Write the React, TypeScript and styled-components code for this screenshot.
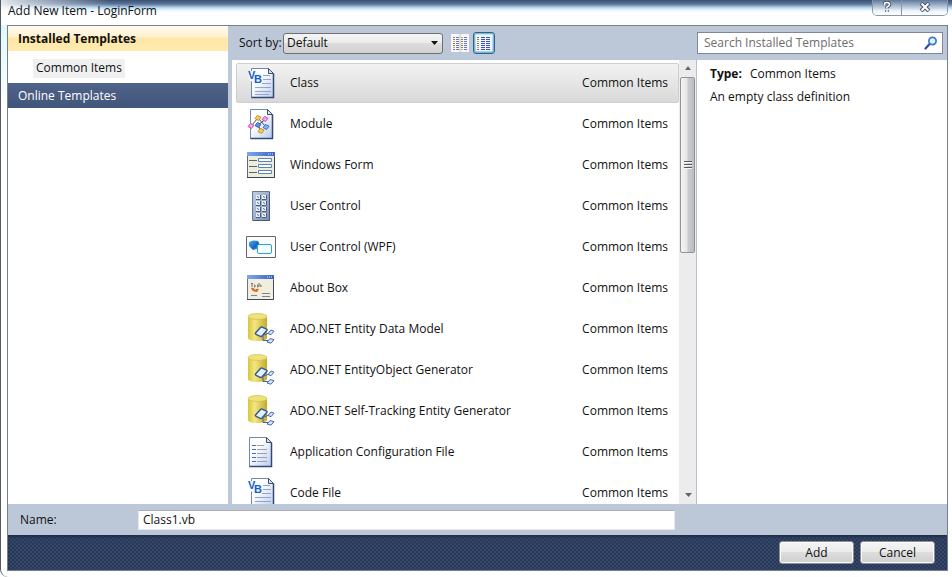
import React, { useState } from "react";
import styled, { createGlobalStyle, css } from "styled-components";

const GlobalStyle = createGlobalStyle`
  * { box-sizing: border-box; }
  body { margin: 0; background: #fff; }
  body, button, input, select {
    font-family: "Open Sans", "Noto Sans", sans-serif;
    font-size: 12px;
    line-height: 16px;
    color: #111;
  }
`;

const Window = styled.main`
  display: flex;
  flex-direction: column;
  height: 100vh;
  min-height: 320px;
  padding: 0 4px 6px 6px;
  overflow: hidden;
  border-left: 1px solid #55585c;
  border-radius: 0 0 0 8px;
  background: linear-gradient(#d3f2fc, #e6fbff 45px, #fff 110px) left top / 6px 120px no-repeat, #fff;
`;

const TitleBar = styled.header`
  display: flex;
  align-items: flex-start;
  justify-content: space-between;
  flex: none;
  height: 25px;
  margin: 0 -4px 0 -6px;
  padding: 0 4px 0 7px;
  background:
    linear-gradient(90deg, rgba(255, 255, 255, 0.85) 0, rgba(255, 255, 255, 0.6) 30px, transparent 110px),
    linear-gradient(#3b5071 0, #5b7498 4px, #bfe0f5 8px, #f4fcff 11px, #fff 14px);
`;

const Title = styled.h1`
  margin: 0;
  padding-top: 3px;
  font-size: 12px;
  font-weight: 400;
  line-height: 16px;
`;

const CaptionButtons = styled.div`
  display: flex;
  height: 16px;
  border: 1px solid #8b97a8;
  border-top: 0;
  border-radius: 0 0 5px 5px;
  overflow: hidden;
`;

const CaptionButton = styled.button<{ $wide?: boolean }>`
  display: flex;
  align-items: center;
  justify-content: center;
  width: ${(p) => (p.$wide ? 46 : 28)}px;
  padding: 0 0 2px;
  border: 0;
  background: linear-gradient(#61789a, #a9bdd3 6px, #eef6fc 11px, #fff);
  & + & { border-left: 1px solid #8b97a8; }
`;

const Frame = styled.div`
  display: flex;
  flex-direction: column;
  flex: 1;
  min-height: 0;
  border: 1px solid #74808f;
  background: #bcc7d8;
`;

const Body = styled.div`
  display: grid;
  grid-template-columns: 220px minmax(0, 1fr) 250px;
  flex: 1;
  min-height: 0;
`;

const Sidebar = styled.nav`
  display: flex;
  flex-direction: column;
  background: #fff;
`;

const SidebarHeading = styled.a<{ $open?: boolean }>`
  height: 25px;
  padding: 5px 10px 4px;
  text-decoration: none;
  ${(p) =>
    p.$open
      ? css`
          color: #111;
          font-weight: 700;
          background: linear-gradient(#fffbef, #fff1cf 11px, #ffe8a6 12px, #ffe9b0);
        `
      : css`
          color: #fff;
          background: linear-gradient(#4f6289, #42557b);
        `}
`;

const SidebarItem = styled.a`
  align-self: flex-start;
  margin: 8px 0 5px 25px;
  padding: 1px 3px 2px;
  color: #111;
  background: #f0f0f0;
  text-decoration: none;
`;

const Center = styled.section`
  display: flex;
  flex-direction: column;
  min-width: 0;
  min-height: 0;
  padding-left: 4px;
`;

const Toolbar = styled.div`
  display: flex;
  align-items: center;
  flex: none;
  height: 34px;
  padding-left: 7px;
`;

const SortLabel = styled.label`
  width: 44px;
  white-space: nowrap;
`;

const SortBox = styled.span`
  position: relative;
  display: flex;
  width: 160px;
  margin-right: 6px;
  svg {
    position: absolute;
    right: 5px;
    top: 8px;
    pointer-events: none;
  }
`;

const SortSelect = styled.select`
  width: 100%;
  height: 21px;
  padding: 0 3px;
  appearance: none;
  border: 1px solid #707070;
  border-radius: 3px;
  background: linear-gradient(#f4f4f4, #ebebeb 50%, #dddddd 50%, #d2d2d2);
  line-height: 18px;
`;

const ViewButton = styled.button<{ $active?: boolean }>`
  display: flex;
  align-items: center;
  justify-content: center;
  width: 22px;
  height: 22px;
  margin-right: 2px;
  padding: 0;
  border: 1px solid ${(p) => (p.$active ? "#2f628a" : "transparent")};
  border-radius: 3px;
  background: ${(p) => (p.$active ? "linear-gradient(#d6edf9, #a7d3ee)" : "none")};
  ${(p) => p.$active && "box-shadow: inset 0 0 1px 1px #75b0d3;"}
`;

const ListArea = styled.div`
  display: flex;
  flex: 1;
  min-height: 0;
  background: #fff;
`;

const List = styled.ul`
  flex: 1;
  min-width: 0;
  margin: 0;
  padding: 3px 0 0 4px;
  overflow: hidden;
  list-style: none;
`;

const Row = styled.button<{ $selected: boolean }>`
  display: flex;
  align-items: center;
  width: 100%;
  height: 40px;
  margin-bottom: 1px;
  padding: 0 10px 0 8px;
  border: 1px solid transparent;
  border-radius: 2px;
  background: none;
  text-align: left;
  ${(p) =>
    p.$selected &&
    css`
      border-color: #cfcfcf;
      background: linear-gradient(#f2f2f2, #d9d9d9);
    `}
  svg { flex: none; }
`;

const RowName = styled.span`
  flex: 1;
  min-width: 0;
  padding-left: 13px;
  white-space: nowrap;
`;

const ScrollBar = styled.div`
  display: flex;
  flex-direction: column;
  flex: none;
  width: 18px;
  padding: 0 1px;
  border-right: 1px solid #b4bfcb;
  background: #ececec;
`;

const ScrollButton = styled.button`
  display: flex;
  align-items: center;
  justify-content: center;
  height: 17px;
  padding: 0;
  border: 0;
  background: none;
`;

const ScrollTrack = styled.div`
  flex: 1;
`;

const ScrollThumb = styled.div`
  display: flex;
  align-items: center;
  justify-content: center;
  height: 43%;
  border: 1px solid #8f9297;
  border-radius: 2px;
  background: linear-gradient(90deg, #f5f5f5, #e6e6e6 45%, #cbcbcf 55%, #bdbdc1);
`;

const Details = styled.aside`
  display: flex;
  flex-direction: column;
  min-height: 0;
`;

const SearchBox = styled.label`
  display: flex;
  align-items: center;
  flex: none;
  height: 22px;
  margin: 6px 4px 6px 0;
  padding-right: 4px;
  border: 1px solid #7c889b;
  background: #fff;
`;

const SearchInput = styled.input`
  flex: 1;
  min-width: 0;
  padding: 0 6px;
  border: 0;
  outline: 0;
  background: none;
  &::placeholder { color: #6d6d6d; opacity: 1; }
`;

const Description = styled.div`
  flex: 1;
  padding: 6px 13px;
  background: #fff;
  p { margin: 0 0 7px; }
  b { margin-right: 8px; }
`;

const NameRow = styled.div`
  display: flex;
  align-items: center;
  flex: none;
  height: 31px;
  padding: 0 272px 0 12px;
`;

const NameLabel = styled.label`
  flex: none;
  width: 118px;
`;

const NameInput = styled.input`
  flex: 1;
  min-width: 0;
  height: 20px;
  padding: 0 4px;
  border: 1px solid #e3e9ef;
  border-top-color: #abadb3;
  background: #fff;
`;

const Footer = styled.footer`
  display: flex;
  align-items: flex-start;
  justify-content: flex-end;
  flex: none;
  gap: 6px;
  height: 35px;
  padding: 6px 12px 6px;
  background:
    linear-gradient(#35486a, #35486a) 0 0 / 1px 1px no-repeat,
    conic-gradient(#34476a 25%, transparent 0) 0 0 / 4px 4px,
    conic-gradient(#34476a 25%, transparent 0) 2px 2px / 4px 4px,
    #293955;
  box-shadow: inset 0 2px 2px #22304a;
`;

const DialogButton = styled.button`
  width: 75px;
  height: 23px;
  padding: 0;
  border: 1px solid #8d8f93;
  border-radius: 3px;
  background: linear-gradient(#f4f4f4, #ebebeb 50%, #dddddd 50%, #cfcfcf);
  box-shadow: inset 0 0 0 1px #fafafa;
`;

type IconKind = "vb" | "module" | "form" | "control" | "wpf" | "about" | "entity" | "config";

const Page = ({ x }: { x: number }) => (
  <g transform={`translate(${x} 0)`}>
    <path d="M.5 1.5h17l5 5v24H.5z" fill="url(#paper)" stroke="#7189ad" />
    <path d="M22.5 6.5v24H.5" fill="none" stroke="#324a73" strokeWidth="1.5" />
    <path d="M17.5 1.5v5h5z" fill="#dce3ec" stroke="#3f4f66" />
  </g>
);

const Gem = ({ x, y, fill, stroke }: { x: number; y: number; fill: string; stroke: string }) => (
  <path
    d="M-3 .5-.5-2.500 3-.8.500 2.500z"
    transform={`translate(${x} ${y})`}
    fill={fill}
    stroke={stroke}
    strokeLinejoin="round"
  />
);

const drawings: Record<IconKind, React.ReactNode> = {
  vb: (
    <>
      <Page x={6} />
      <path d="M18 8.500h7M18 12.500h8M12 16.500h14M10 20.500h16M10 24.500h16M10 27.500h14" stroke="#94a5ca" />
      <path d="M2 4h8l7 4v9H9l-5-5z" fill="#f4f8ff" />
      <g fill="#1761c6" fontFamily="Liberation Sans, sans-serif" fontWeight="700" fontSize="11">
        <text x="3" y="12">V</text>
        <text x="9" y="16">B</text>
      </g>
    </>
  ),
  module: (
    <>
      <Page x={5} />
      <path d="m6 18 7-8 8 9m-8-2 8-6m-8 6 3 6" fill="none" stroke="#41495c" />
      <Gem x={13} y={10} fill="#f7cf5d" stroke="#c98d17" />
      <Gem x={20} y={11} fill="#f3a2ea" stroke="#c252bd" />
      <Gem x={6} y={18} fill="#f3a2ea" stroke="#c252bd" />
      <Gem x={13} y={17} fill="#5f95ea" stroke="#2e62b8" />
      <Gem x={21} y={19} fill="#8db5f5" stroke="#3a6dc0" />
      <Gem x={16} y={23} fill="#f7cf5d" stroke="#c98d17" />
    </>
  ),
  form: (
    <>
      <path d="M2.500 3.500h27v25h-27z" fill="#eeecdd" stroke="#5c6a80" />
      <path d="M2 3h28v4H2z" fill="url(#caption)" />
      <path d="M23 5h1m1 0h1m1 0h1" stroke="#dbe7ff" />
      <path d="M4 11.500h8m-8 6h8m-8 6h8" stroke="#59606e" />
      <path d="M13.500 9.500h13v3h-13zm0 6h13v3h-13zm0 6h13v3h-13z" fill="#fff" stroke="#5a83bd" />
      <path d="M29.500 8v20.500H2" fill="none" stroke="#384454" />
    </>
  ),
  control: (
    <>
      <path d="M7.500 1.500h17v29h-17z" fill="url(#steel)" stroke="#66799b" />
      <path d="M24.500 2v28.500H8" fill="none" stroke="#485878" />
      {[5, 11, 17, 23].map((y) =>
        [11, 17].map((x) => (
          <g key={`${x}-${y}`} transform={`translate(${x} ${y})`}>
            <path d="M0 0h5v5H0z" fill="#e8eef7" />
            <path d="M4.500 0v4.500H0" fill="none" stroke="#4a5b7b" />
            <path d="M1 1.500h1v1h1" fill="none" stroke="#7688a7" />
          </g>
        )),
      )}
    </>
  ),
  wpf: (
    <>
      <path d="M1.500 5.500h29v21h-29z" fill="#fbfbfc" stroke="#64686e" />
      <path d="M4 11 8 9.500l5 .5 2 4-3 4-4 1-4-4z" fill="url(#blob)" />
      <rect x="12.500" y="13.500" width="14" height="9" rx="1.500" fill="#f6fdff" stroke="#27a7d8" />
    </>
  ),
  about: (
    <>
      <path d="M2.500 3.500h26v24h-26z" fill="#f2eedf" stroke="#6d7380" />
      <path d="M2 3h27v4H2z" fill="url(#caption)" />
      <path d="M22 5h1m1 0h1m1 0h1" stroke="#dbe7ff" />
      <path d="m6 11 1 1 1-1m-1 1v3m2-2h1v2H9m3-2h1v2h-1m2-4v4m1-2h1v2" fill="none" stroke="#5c5040" strokeWidth=".8" />
      <path d="M6 16q3-1 4 2 2-2 4-1l-2 3q-5 0-6-4z" fill="#d56b1c" />
      <path d="M6 23.500h6m5-2h8m-8 3h8" stroke="#7b8290" />
      <path d="M28.500 8v19.500H2" fill="none" stroke="#434a56" />
    </>
  ),
  entity: (
    <>
      <path d="M3 3v22c0 4 19 4 19 0V3z" fill="url(#gold)" />
      <ellipse cx="12.500" cy="3.500" rx="9.500" ry="3" fill="#ede27c" stroke="#d0c04a" strokeWidth=".7" />
      <path d="M18 22v5.500h6M19 22l5-2" fill="none" stroke="#44649c" />
      <path d="m10.500 20 5-5.500q.7-.7 1.600-.4l4.400 1.900q1 .6.300 1.500l-4.800 5.500q-.7.700-1.600.3l-4.300-1.900q-1-.6-.6-1.400z" fill="#e4efff" stroke="#33578f" strokeWidth="1.400" />
      <path d="m23 20.500 3-3.500 3 1.200-3 3.500zm-1 8.500 3-3.500 4 1.200-3 3.500z" fill="#d2e4ff" stroke="#466caa" strokeLinejoin="round" />
    </>
  ),
  config: (
    <>
      <Page x={4} />
      <path d="M7 9.500h4m-4 4h4m-4 4h4m-4 4h4m-4 4h4" stroke="#486fb6" />
      <path d="M12 9.500h7m-7 4h10m-10 4h10m-10 4h10m-10 4h10" stroke="#99a0b0" />
    </>
  ),
};

const TemplateIcon = ({ kind }: { kind: IconKind }) => (
  <svg width="32" height="32" viewBox="0 0 32 32" aria-hidden="true">
    {drawings[kind]}
  </svg>
);

const Gradients = () => (
  <svg width="0" height="0" display="block" aria-hidden="true">
    <defs>
      <linearGradient id="paper" x1="0" y1="0" x2="1" y2="1">
        <stop offset=".35" stopColor="#fff" />
        <stop offset="1" stopColor="#b9cbef" />
      </linearGradient>
      <linearGradient id="caption">
        <stop offset="0" stopColor="#7fa8ee" />
        <stop offset="1" stopColor="#3a63c0" />
      </linearGradient>
      <linearGradient id="steel" x1="0" y1="0" x2="1" y2="1">
        <stop offset="0" stopColor="#c1d0e6" />
        <stop offset="1" stopColor="#7c8fae" />
      </linearGradient>
      <linearGradient id="blob" x1="0" y1="0" x2="1" y2="1">
        <stop offset="0" stopColor="#4fb0f0" />
        <stop offset=".6" stopColor="#1763bf" />
        <stop offset="1" stopColor="#7cc4f0" />
      </linearGradient>
      <linearGradient id="gold">
        <stop offset="0" stopColor="#d9c63f" />
        <stop offset=".35" stopColor="#f2e780" />
        <stop offset="1" stopColor="#c5a92a" />
      </linearGradient>
    </defs>
  </svg>
);

const ViewGlyph = ({ columns }: { columns: 1 | 2 }) => (
  <svg width="18" height="18" viewBox="0 0 18 18" aria-hidden="true">
    {columns === 2 ? (
      <path d="M0 0h8.500v18H0zM9.500 0H18v18H9.500z" fill="#f5f7fc" />
    ) : (
      <path d="M1 1h16v16H1z" fill="#eff7fd" />
    )}
    {[3, 5, 7, 9, 11, 13, 15].map((y, i) => (
      <g key={y} fill="none">
        <path d={`M2 ${y}.500h2`} stroke={["#c9574d", "#5f9d55", "#d3a636"][i % 3]} />
        {columns === 2 ? (
          <>
            <path d={`M5 ${y}.500h3m5 0h3`} stroke="#6b79bb" />
            <path d={`M10 ${y}.500h2`} stroke={["#d3a636", "#c9574d", "#5f9d55"][i % 3]} />
          </>
        ) : (
          <path d={`M6 ${y}.500h4m1 0h4`} stroke="#3d51b0" />
        )}
      </g>
    ))}
  </svg>
);

const Arrow = ({ up, fill = "#666" }: { up?: boolean; fill?: string }) => (
  <svg width="8" height="5" viewBox="0 0 8 5" aria-hidden="true">
    <path d={up ? "M4 0 7 4H1z" : "M1 0h7L4.500 4z"} fill={fill} />
  </svg>
);

const templates: { name: string; icon: IconKind }[] = [
  { name: "Class", icon: "vb" },
  { name: "Module", icon: "module" },
  { name: "Windows Form", icon: "form" },
  { name: "User Control", icon: "control" },
  { name: "User Control (WPF)", icon: "wpf" },
  { name: "About Box", icon: "about" },
  { name: "ADO.NET Entity Data Model", icon: "entity" },
  { name: "ADO.NET EntityObject Generator", icon: "entity" },
  { name: "ADO.NET Self-Tracking Entity Generator", icon: "entity" },
  { name: "Application Configuration File", icon: "config" },
  { name: "Code File", icon: "vb" },
];

export default function App() {
  const [selected, setSelected] = useState("Class");
  return (
    <Window>
      <GlobalStyle />
      <Gradients />
      <TitleBar>
        <Title>Add New Item - LoginForm</Title>
        <CaptionButtons>
          <CaptionButton aria-label="Help">
            <svg width="10" height="12" viewBox="0 0 10 12">
              <path d="M2.500 4V3q0-1.500 2.500-1.500T7.500 3.500Q7.500 5 5 6v1.500M5 9v2" fill="none" stroke="#46536a" strokeWidth="3.400" />
              <path d="M2.500 4V3q0-1.500 2.500-1.500T7.500 3.500Q7.500 5 5 6v1.500M5 9v2" fill="none" stroke="#fff" strokeWidth="1.600" />
            </svg>
          </CaptionButton>
          <CaptionButton $wide aria-label="Close">
            <svg width="12" height="10" viewBox="0 0 12 10">
              <path d="m2 1 8 8m0-8L2 9" stroke="#46536a" strokeWidth="4" />
              <path d="m2.500 1.500 7 7m0-7-7 7" stroke="#fff" strokeWidth="2" />
            </svg>
          </CaptionButton>
        </CaptionButtons>
      </TitleBar>
      <Frame>
        <Body>
          <Sidebar>
            <SidebarHeading href="#installed" $open>Installed Templates</SidebarHeading>
            <SidebarItem href="#common">Common Items</SidebarItem>
            <SidebarHeading href="#online">Online Templates</SidebarHeading>
          </Sidebar>
          <Center>
            <Toolbar>
              <SortLabel htmlFor="sort">Sort by:</SortLabel>
              <SortBox>
                <SortSelect id="sort"><option>Default</option></SortSelect>
                <Arrow fill="#111" />
              </SortBox>
              <ViewButton aria-label="Small icons"><ViewGlyph columns={2} /></ViewButton>
              <ViewButton aria-label="Medium icons" $active><ViewGlyph columns={1} /></ViewButton>
            </Toolbar>
            <ListArea>
              <List>
                {templates.map((t) => (
                  <li key={t.name}>
                    <Row $selected={t.name === selected} onClick={() => setSelected(t.name)}>
                      <TemplateIcon kind={t.icon} />
                      <RowName>{t.name}</RowName>
                      <span>Common Items</span>
                    </Row>
                  </li>
                ))}
              </List>
              <ScrollBar>
                <ScrollButton aria-label="Scroll up"><Arrow up /></ScrollButton>
                <ScrollTrack>
                  <ScrollThumb>
                    <svg width="8" height="8" viewBox="0 0 8 8" aria-hidden="true">
                      <path d="M0 .5h8m-8 3h8m-8 3h8" stroke="#55585e" />
                      <path d="M0 1.500h8m-8 3h8m-8 3h8" stroke="#f6f6f6" />
                    </svg>
                  </ScrollThumb>
                </ScrollTrack>
                <ScrollButton aria-label="Scroll down"><Arrow /></ScrollButton>
              </ScrollBar>
            </ListArea>
          </Center>
          <Details>
            <SearchBox>
              <SearchInput type="search" aria-label="Search Installed Templates" placeholder="Search Installed Templates" />
              <svg width="14" height="14" viewBox="0 0 14 14" aria-hidden="true">
                <path d="m1.500 12.500 4.500-5" stroke="#2a4f9c" strokeWidth="2.200" strokeLinecap="round" />
                <circle cx="8.500" cy="5" r="3.600" fill="#e3f3ff" stroke="#3977c4" strokeWidth="1.700" />
              </svg>
            </SearchBox>
            <Description>
              <p><b>Type:</b>Common Items</p>
              <p>An empty class definition</p>
            </Description>
          </Details>
        </Body>
        <NameRow>
          <NameLabel htmlFor="name">Name:</NameLabel>
          <NameInput id="name" defaultValue="Class1.vb" />
        </NameRow>
        <Footer>
          <DialogButton>Add</DialogButton>
          <DialogButton>Cancel</DialogButton>
        </Footer>
      </Frame>
    </Window>
  );
}
